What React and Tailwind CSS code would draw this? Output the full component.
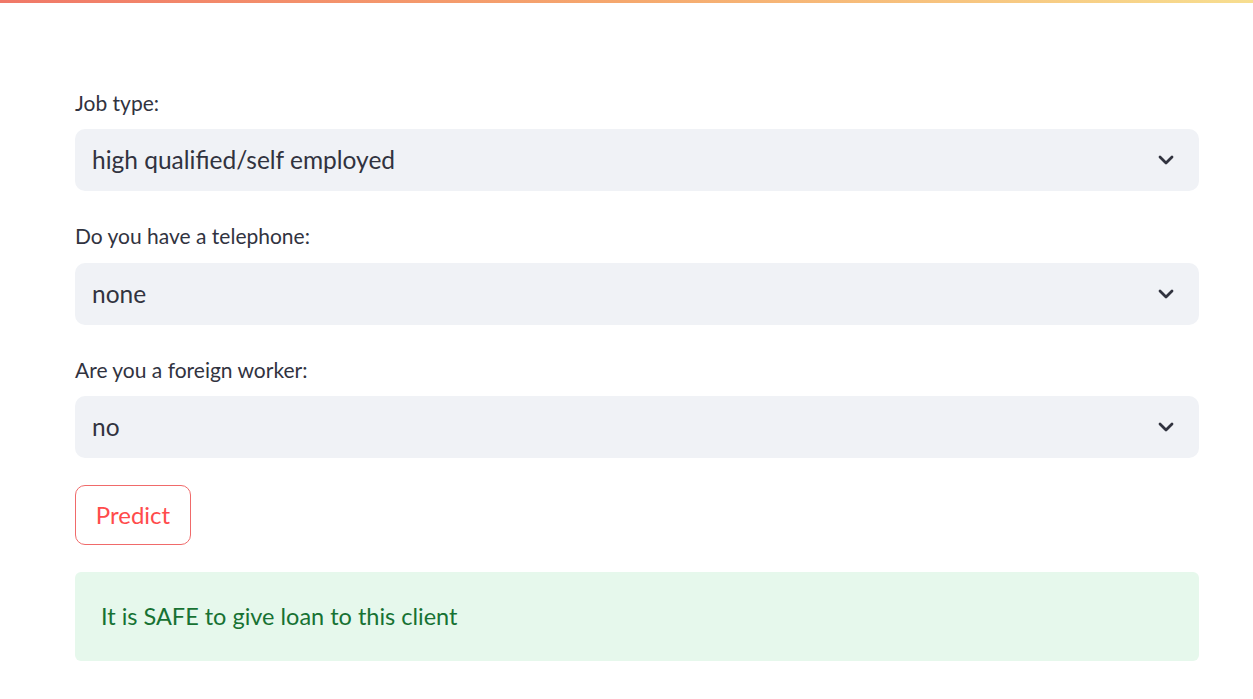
import React from "react";

function Chevron() {
  return (
    <svg width="18" height="12" viewBox="0 0 18 12" className="shrink-0">
      <polyline points="3,3 9,9 15,3" fill="none" stroke="#31333f" strokeWidth="2.8" strokeLinecap="round" strokeLinejoin="round" />
    </svg>
  );
}

function SelectField({ label, value }) {
  return (
    <div className="flex flex-col">
      <div className="h-[44.5px] pt-[6px] text-[21px] leading-[24px] text-[#31333f]">{label}</div>
      <div className="h-[62px] rounded-[10px] bg-[#f0f2f6] flex items-center justify-between pl-[17px] pr-[24px]">
        <span className="text-[24.5px] leading-[30px] text-[#31333f]">{value}</span>
        <Chevron />
      </div>
    </div>
  );
}

export default function App() {
  return (
    <div className="min-h-[699px] bg-white" style={{ fontFamily: "Lato, 'Noto Sans', sans-serif" }}>
      <div className="h-[3px] bg-gradient-to-r from-[#f07868] via-[#f5a86e] to-[#f7de90]" />
      <div className="pt-[81.5px] pl-[75px] pr-[54px] flex flex-col gap-[27px]">
        <SelectField label="Job type:" value="high qualified/self employed" />
        <SelectField label="Do you have a telephone:" value="none" />
        <SelectField label="Are you a foreign worker:" value="no" />
        <div>
          <button className="h-[60px] w-[116px] rounded-[10px] border border-[#f06a6a] text-[#ff4b4b] text-[24px] leading-[30px] bg-white">
            Predict
          </button>
        </div>
        <div className="h-[88.5px] rounded-[6px] bg-[#e6f8ec] flex items-center pl-[26px]">
          <span className="text-[23.5px] leading-[30px] text-[#177233]">It is SAFE to give loan to this client</span>
        </div>
      </div>
    </div>
  );
}
